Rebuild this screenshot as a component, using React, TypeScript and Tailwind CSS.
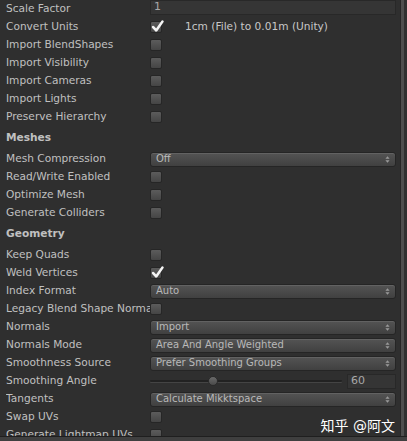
import type { ReactNode } from 'react';

type Field =
  | { kind: 'check'; label: string; on?: boolean; note?: string }
  | { kind: 'select'; label: string; value: string }
  | { kind: 'header'; label: string };

const fields: Field[] = [
  { kind: 'check', label: 'Convert Units', on: true, note: '1cm (File) to 0.01m (Unity)' },
  { kind: 'check', label: 'Import BlendShapes' },
  { kind: 'check', label: 'Import Visibility' },
  { kind: 'check', label: 'Import Cameras' },
  { kind: 'check', label: 'Import Lights' },
  { kind: 'check', label: 'Preserve Hierarchy' },
  { kind: 'header', label: 'Meshes' },
  { kind: 'select', label: 'Mesh Compression', value: 'Off' },
  { kind: 'check', label: 'Read/Write Enabled' },
  { kind: 'check', label: 'Optimize Mesh' },
  { kind: 'check', label: 'Generate Colliders' },
  { kind: 'header', label: 'Geometry' },
  { kind: 'check', label: 'Keep Quads' },
  { kind: 'check', label: 'Weld Vertices', on: true },
  { kind: 'select', label: 'Index Format', value: 'Auto' },
  { kind: 'check', label: 'Legacy Blend Shape Normals' },
  { kind: 'select', label: 'Normals', value: 'Import' },
  { kind: 'select', label: 'Normals Mode', value: 'Area And Angle Weighted' },
  { kind: 'select', label: 'Smoothness Source', value: 'Prefer Smoothing Groups' },
];

const tail: Field[] = [
  { kind: 'select', label: 'Tangents', value: 'Calculate Mikktspace' },
  { kind: 'check', label: 'Swap UVs' },
  { kind: 'check', label: 'Generate Lightmap UVs' },
];

function Row({ label, children }: { label: string; children?: ReactNode }) {
  return (
    <div className="flex h-[18px] items-center">
      <div className="w-[144px] shrink-0 overflow-hidden whitespace-nowrap text-[10.6px] text-[#c0c0c0]">{label}</div>
      <div className="flex min-w-0 flex-1 items-center">{children}</div>
    </div>
  );
}

function Checkbox({ on }: { on?: boolean }) {
  return (
    <span className="relative block h-[12px] w-[12px] rounded-[2px] border border-[#262626] bg-gradient-to-b from-[#5c5c5c] to-[#454545]">
      {on && (
        <svg viewBox="0 0 12 12" className="absolute -top-[2px] left-[0px] h-[13px] w-[13px]">
          <path d="M2 6.5 L4.8 9.6 L10.5 1.5" fill="none" stroke="#f4f4f4" strokeWidth="2.4" strokeLinecap="round" strokeLinejoin="round" />
        </svg>
      )}
    </span>
  );
}

function Arrows() {
  return (
    <svg viewBox="0 0 6 10" className="h-[9px] w-[5px]">
      <path d="M3 1 L5.5 4 H0.5 Z M3 9 L5.5 6 H0.5 Z" fill="#9a9a9a" />
    </svg>
  );
}

function Select({ value }: { value: string }) {
  return (
    <div className="flex h-[15px] flex-1 items-center justify-between rounded-[3px] border border-[#252525] bg-gradient-to-b from-[#545454] to-[#404040] pl-[5px] pr-[5px] shadow-[inset_0_1px_0_#626262]">
      <span className="text-[10px] leading-none text-[#b9b9b9]">{value}</span>
      <Arrows />
    </div>
  );
}

function FieldRow({ f }: { f: Field }) {
  if (f.kind === 'header') {
    return (
      <div className="flex h-[24px] items-center text-[10.6px] font-bold text-[#c0c0c0]">{f.label}</div>
    );
  }
  if (f.kind === 'select') {
    return (
      <Row label={f.label}>
        <Select value={f.value} />
      </Row>
    );
  }
  return (
    <Row label={f.label}>
      <Checkbox on={f.on} />
      {f.note && <span className="ml-[23px] text-[10.6px] text-[#c8c8c8]">{f.note}</span>}
    </Row>
  );
}

export default function App() {
  return (
    <div
      className="relative h-[441px] w-[407px] overflow-hidden bg-[#2f2f2f]"
      style={{ fontFamily: '"DejaVu Sans", "Noto Sans CJK SC", sans-serif' }}
    >
      <div className="flex h-full">
        {/* inspector body */}
        <div className="flex-1 pl-[6px] pr-[4px]">
          <Row label="Scale Factor">
            <div className="-mt-[3px] flex h-[15px] flex-1 items-center border border-[#282828] bg-[#353535] pl-[3px] text-[11px] text-[#a8a8a8]">
              1
            </div>
          </Row>
          {fields.map((f) => (
            <FieldRow key={f.label} f={f} />
          ))}
          <Row label="Smoothing Angle">
            <div className="relative mr-[5px] flex h-[14px] flex-1 items-center">
              <div className="h-[2px] w-full rounded bg-[#222] shadow-[0_1px_0_#444]" />
              <span className="absolute left-[58px] top-[2px] h-[10px] w-[10px] rounded-full border border-[#2a2a2a] bg-gradient-to-b from-[#6a6a6a] to-[#4a4a4a]" />
            </div>
            <div className="flex h-[15px] w-[49px] items-center border border-[#282828] bg-[#353535] pl-[3px] text-[11px] text-[#a8a8a8]">
              60
            </div>
          </Row>
          {tail.map((f) => (
            <FieldRow key={f.label} f={f} />
          ))}
        </div>
        {/* scrollbar */}
        <div className="flex w-[7px] shrink-0">
          <div className="w-[1px] bg-[#262626]" />
          <div className="w-[3px] bg-[#4e4e4e]" />
          <div className="w-[3px] bg-[#303030]" />
        </div>
      </div>

      <div className="absolute right-[12px] top-[419px] text-[14px] leading-none text-white">知乎 @阿文</div>

      <div className="absolute bottom-0 left-0 h-[5px] w-full border-t border-[#1f1f1f] bg-[#3f3f3f]" />
    </div>
  );
}
